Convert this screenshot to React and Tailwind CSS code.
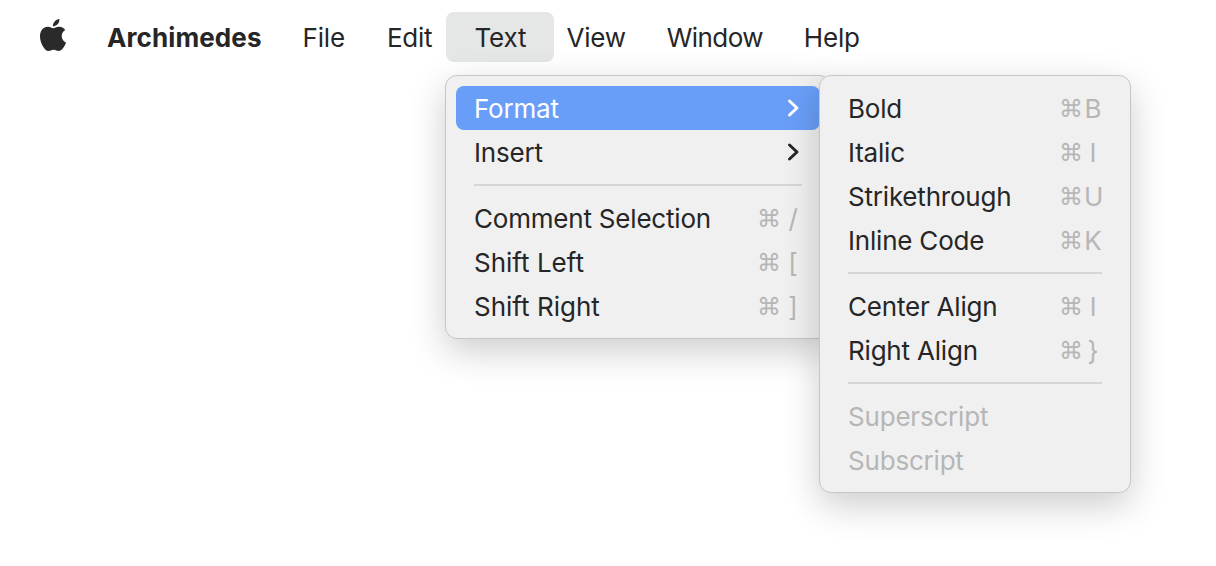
import { SiApple } from 'react-icons/si';

const MENUS = [
  { label: 'File', className: 'pl-[21px] pr-[21px]' },
  { label: 'Edit', className: 'pl-[21px] pr-[22px]' },
  { label: 'Text', className: '-mx-2 w-[108px] justify-center rounded-lg bg-[#e5e6e6]' },
  { label: 'View', className: 'pl-[20px] pr-[21px]' },
  { label: 'Window', className: 'pl-[20px] pr-[20px] tracking-[-0.6px]' },
  { label: 'Help', className: 'pl-[21px] pr-[21px]' },
];

const TEXT_MENU = [
  [
    { label: 'Format', sub: true, active: true },
    { label: 'Insert', sub: true },
  ],
  [
    { label: 'Comment Selection', key: '/' },
    { label: 'Shift Left', key: '[', wide: true },
    { label: 'Shift Right', key: ']', wide: true },
  ],
];

const FORMAT_MENU = [
  [
    { label: 'Bold', key: 'B' },
    { label: 'Italic', key: 'I' },
    { label: 'Strikethrough', key: 'U' },
    { label: 'Inline Code', key: 'K' },
  ],
  [
    { label: 'Center Align', key: 'l' },
    { label: 'Right Align', key: '}' },
  ],
  [
    { label: 'Superscript', disabled: true },
    { label: 'Subscript', disabled: true },
  ],
];

const Chevron = () => (
  <svg width="14" height="20" viewBox="0 0 14 20" fill="none" stroke="currentColor" strokeWidth="3" strokeLinecap="round" strokeLinejoin="round" className="mr-px">
    <path d="M2.5 3 L10 10 L2.5 17" />
  </svg>
);

const Row = ({ label, sub, active, disabled, wide, shortcut, keysWidth }) => (
  <div className={`flex items-center h-11 rounded-lg px-[18px] ${active ? 'bg-[#699ef8] text-white' : disabled ? 'text-[#b6b6b6]' : 'text-[#262626]'}`}>
    <span className={`flex-1 pt-px ${wide ? 'tracking-normal' : ''}`}>{label}</span>
    {sub && <Chevron />}
    {shortcut && (
      <span className={`flex items-center text-[#b6b6b6] ${keysWidth}`}>
        <span className="flex-1 pt-0.5 text-[24px] font-['DejaVu_Sans',sans-serif]">⌘</span>
        <span className="w-[18px] text-center pt-px">{shortcut}</span>
      </span>
    )}
  </div>
);

const Panel = ({ groups, className, keysWidth }) => (
  <div className={`absolute top-[75px] rounded-xl border border-[#c6c6c6] bg-[#f0f0f0] p-[10px] shadow-[0_12px_36px_rgba(0,0,0,0.2)] ${className}`}>
    {groups.map((group, i) => (
      <div key={i}>
        {i > 0 && <div className="mx-[18px] my-[10px] h-0.5 bg-[#d6d6d6]" />}
        {group.map((item) => (
          <Row key={item.label} {...item} shortcut={item.key} keysWidth={keysWidth} />
        ))}
      </div>
    ))}
  </div>
);

const App = () => {
  return (
    <div className="relative h-[566px] w-[1216px] overflow-hidden bg-white font-['Inter',sans-serif] text-[26px] tracking-[-0.2px] text-[#262626]">
      {/* menu bar */}
      <div className="flex items-center h-[74px]">
        <SiApple size={32} className="ml-[37px] mb-1 text-[#2a2a2a]" />
        <span className="ml-[38px] mr-[20px] font-bold tracking-[0.1px]">Archimedes</span>
        {MENUS.map(({ label, className }) => (
          <span key={label} className={`h-[50px] flex items-center ${className}`}>
            {label}
          </span>
        ))}
      </div>

      <Panel groups={TEXT_MENU} className="left-[445px] w-[386px]" keysWidth="w-[45px]" />
      <Panel groups={FORMAT_MENU} className="left-[819px] w-[312px]" keysWidth="w-[43px]" />
    </div>
  );
};

export default App;
